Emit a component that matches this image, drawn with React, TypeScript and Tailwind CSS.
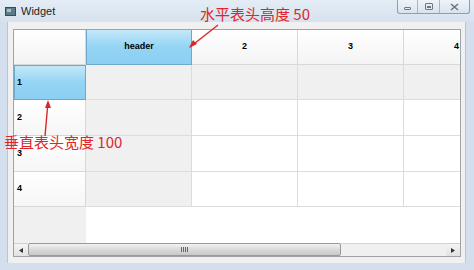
const cols = ["header", "2", "3", "4"];
const rows = [
  { label: "1", h: "h-[35px]" },
  { label: "2", h: "h-[36px]" },
  { label: "3", h: "h-[36px]" },
  { label: "4", h: "h-[35px]" },
];

function CaptionButtons() {
  return (
    <div className="absolute right-[4px] top-0 flex h-[14px] overflow-hidden rounded-b-[3px] border border-t-0 border-[#8e9db2] bg-gradient-to-b from-[#eef3f9] to-[#d9e3ee]">
      <div className="flex w-[20px] items-center justify-center border-r border-[#a9b6c6]">
        <div className="mt-[3px] h-[3px] w-[7px] rounded-[1px] border border-[#6d7886]" />
      </div>
      <div className="flex w-[22px] items-center justify-center border-r border-[#a9b6c6]">
        <div className="flex h-[7px] w-[8px] items-center justify-center rounded-[1px] border border-[#6d7886]">
          <div className="h-[2px] w-[4px] border border-[#6d7886]" />
        </div>
      </div>
      <div className="flex w-[29px] items-center justify-center">
        <svg width="9" height="8" viewBox="0 0 9 8">
          <path d="M1 1 L8 7 M8 1 L1 7" stroke="#6d7886" strokeWidth="1.6" />
        </svg>
      </div>
    </div>
  );
}

function HeaderCell({ text, active }: { text: string; active: boolean }) {
  return (
    <div
      className={
        active
          ? "flex h-full w-[106px] shrink-0 items-center justify-center border-x border-b border-[#6fa9c9] bg-gradient-to-b from-[#c3e8fa] via-[#94d4f5] to-[#8ccff2] font-bold"
          : "flex h-full w-[106px] shrink-0 items-center justify-center border-r border-b border-[#d8d8d8] bg-gradient-to-b from-white to-[#f4f4f4] font-bold"
      }
    >
      {text}
    </div>
  );
}

export default function App() {
  return (
    <div className="relative h-[270px] w-[474px] overflow-hidden bg-[#d3dfec] font-['Liberation_Sans',Arial,sans-serif] text-[9px] text-black">
      {/* title bar */}
      <div className="relative flex h-[22px] items-center gap-[5px] bg-gradient-to-b from-[#e4ecf5] to-[#d6e2ee] pl-[5px]">
        <div className="h-[9px] w-[11px] border border-[#3c4a58] bg-[#5d7a8f]">
          <div className="ml-[1px] mt-[1px] h-[3px] w-[4px] bg-[#a6d38a]" />
        </div>
        <span className="text-[11px] text-[#1e1e1e]">Widget</span>
        <CaptionButtons />
      </div>

      {/* client area */}
      <div className="mx-[7px] h-[241px] w-[459px] border-x border-[#b9c6d4] bg-[#f0f0f0] pl-[5px] pt-[7px]">
        <div className="flex h-[228px] w-[448px] flex-col border border-[#9fa3a8] bg-white">
          <div className="h-[213px] overflow-hidden">
            {/* header row */}
            <div className="flex h-[35px]">
              <div className="h-full w-[72px] shrink-0 border-r border-b border-[#d8d8d8] bg-gradient-to-b from-white to-[#f3f3f3]" />
              {cols.map((c, i) => (
                <HeaderCell key={c} text={c} active={i === 0} />
              ))}
            </div>
            {rows.map((r, ri) => (
              <div key={r.label} className={`flex ${r.h}`}>
                <div
                  className={
                    ri === 0
                      ? "flex h-full w-[72px] shrink-0 items-center border border-[#6fa9c9] bg-gradient-to-b from-[#c3e8fa] via-[#94d4f5] to-[#8ccff2] pl-[2px] font-bold"
                      : "flex h-full w-[72px] shrink-0 items-center border-r border-b border-[#d8d8d8] bg-gradient-to-b from-white to-[#f6f6f6] pl-[3px] font-bold"
                  }
                >
                  {r.label}
                </div>
                {cols.map((c, ci) => (
                  <div
                    key={c}
                    className={`h-full w-[106px] shrink-0 border-r border-b border-[#dcdcdc] ${
                      ri === 0 || ci === 0 ? "bg-[#f0f0f0]" : "bg-white"
                    }`}
                  />
                ))}
              </div>
            ))}
            <div className="flex h-[36px]">
              <div className="h-full w-[72px] shrink-0 bg-[#f0f0f0]" />
              <div className="h-full flex-1 bg-white" />
            </div>
          </div>

          {/* horizontal scrollbar */}
          <div className="flex h-[13px] bg-[#ececec]">
            <div className="flex w-[14px] items-center justify-center border-t border-[#d0d0d0] bg-gradient-to-b from-[#f4f4f4] to-[#e2e2e2]">
              <svg width="4" height="5" viewBox="0 0 4 5">
                <path d="M4 0 L0 2.5 L4 5 Z" fill="#333" />
              </svg>
            </div>
            <div className="flex w-[313px] items-center justify-center rounded-[2px] border border-[#9a9a9a] bg-gradient-to-b from-[#f2f2f2] via-[#dadada] to-[#c9c9c9]">
              <div className="flex gap-[1px]">
                <div className="h-[5px] w-[1px] bg-[#666]" />
                <div className="h-[5px] w-[1px] bg-[#666]" />
                <div className="h-[5px] w-[1px] bg-[#666]" />
                <div className="h-[5px] w-[1px] bg-[#666]" />
              </div>
            </div>
            <div className="flex-1 border-t border-[#d6d6d6] bg-[#f0f0f0]" />
            <div className="flex w-[14px] items-center justify-center border-t border-[#d0d0d0] bg-gradient-to-b from-[#f4f4f4] to-[#e2e2e2]">
              <svg width="4" height="5" viewBox="0 0 4 5">
                <path d="M0 0 L4 2.5 L0 5 Z" fill="#333" />
              </svg>
            </div>
          </div>
        </div>
      </div>

      {/* annotations */}
      <div className="absolute left-[200px] top-[4px] font-['Noto_Sans_CJK_SC',sans-serif] text-[15px] leading-[20px] text-[#e0262b]">
        水平表头高度 50
      </div>
      <div className="absolute left-[4px] top-[132px] font-['Noto_Sans_CJK_SC',sans-serif] text-[15px] leading-[20px] text-[#e0262b]">
        垂直表头宽度 100
      </div>
      <svg className="pointer-events-none absolute left-0 top-0" width="474" height="270">
        <path d="M218 25 L190 47" stroke="#d42a2c" strokeWidth="1.4" />
        <path d="M189 48 L197 44 L193 40 Z" fill="#d42a2c" />
        <path d="M45 136 L48 102" stroke="#d42a2c" strokeWidth="1.4" />
        <path d="M48 100 L45 108 L51 108 Z" fill="#d42a2c" />
      </svg>
    </div>
  );
}
